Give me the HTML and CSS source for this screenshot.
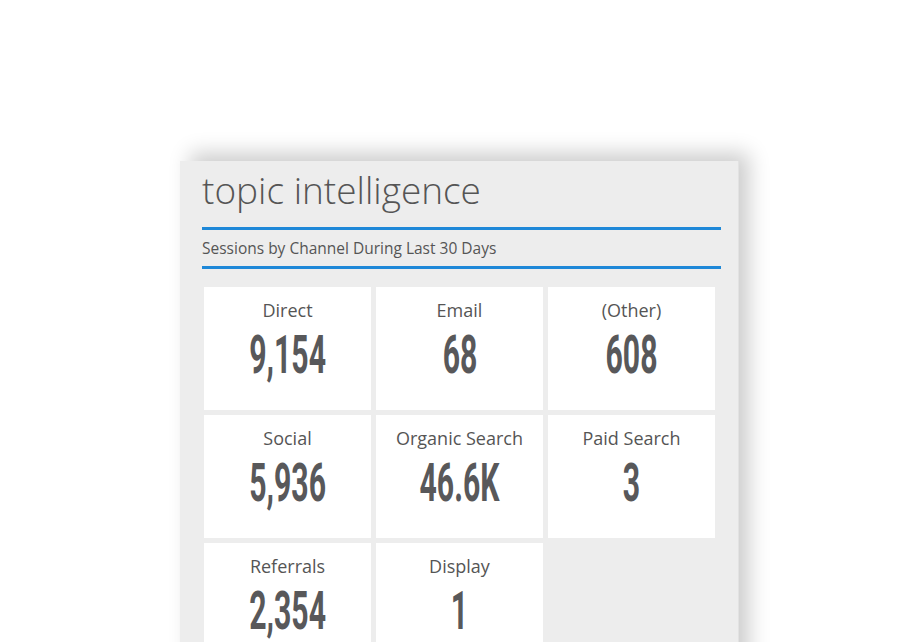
FILE: index.html
```html
<!DOCTYPE html>
<html lang="en">
<head>
  <meta charset="UTF-8" />
  <title>topic intelligence</title>
  <link rel="stylesheet" href="styles.css">
</head>
<body>

  <!-- dashboard card -->
  <div class="card">
    <h1 class="title">topic intelligence</h1>
    <h2 class="subtitle">Sessions by Channel During Last 30 Days</h2>

    <div class="tiles">
      <div class="tile">
        <span class="tile-label">Direct</span>
        <span class="tile-value">9,154</span>
      </div>
      <div class="tile">
        <span class="tile-label">Email</span>
        <span class="tile-value">68</span>
      </div>
      <div class="tile">
        <span class="tile-label">(Other)</span>
        <span class="tile-value">608</span>
      </div>
      <div class="tile">
        <span class="tile-label">Social</span>
        <span class="tile-value">5,936</span>
      </div>
      <div class="tile">
        <span class="tile-label">Organic Search</span>
        <span class="tile-value">46.6K</span>
      </div>
      <div class="tile">
        <span class="tile-label">Paid Search</span>
        <span class="tile-value">3</span>
      </div>
      <div class="tile">
        <span class="tile-label">Referrals</span>
        <span class="tile-value">2,354</span>
      </div>
      <div class="tile">
        <span class="tile-label">Display</span>
        <span class="tile-value">1</span>
      </div>
    </div>
  </div>

</body>
</html>
```

FILE: styles.css
```css
* { margin: 0; padding: 0; box-sizing: border-box; }
body {
  background-color: #ffffff;
  font-family: "Open Sans", sans-serif;
  color: #555555;
  height: 100vh;
  overflow: hidden;
}
.card {
  width: 559px;
  height: 560px;
  margin: 161px 0 0 180px;
  padding: 0 17px 0 22px;
  background-color: #ededed;
  border-right: 1px solid #e2e2e2;
  box-shadow: 10px -8px 20px rgba(0, 0, 0, 0.2);
}
.title {
  font-size: 37px;
  font-weight: 300;
  line-height: 48px;
  padding-top: 5px;
  padding-bottom: 13px;
  border-bottom: 3px solid #1e88d8;
}
.subtitle {
  font-size: 15.5px;
  font-weight: 400;
  line-height: 20px;
  padding: 8px 0 8px;
  border-bottom: 3px solid #1e88d8;
}
.tiles {
  display: grid;
  grid-template-columns: repeat(3, 1fr);
  grid-auto-rows: 123px;
  gap: 5px 5px;
  margin: 18px 6px 0 2px;
}
.tile {
  background-color: #ffffff;
  display: flex;
  flex-direction: column;
  align-items: center;
  padding-top: 11px;
}
.tile-label {
  font-size: 18px;
  line-height: 25px;
}
.tile-value {
  display: inline-block;
  font-family: "Roboto", sans-serif;
  font-weight: 700;
  font-size: 54px;
  line-height: 64px;
  color: #58585a;
  transform: scaleX(0.56);
}
```
